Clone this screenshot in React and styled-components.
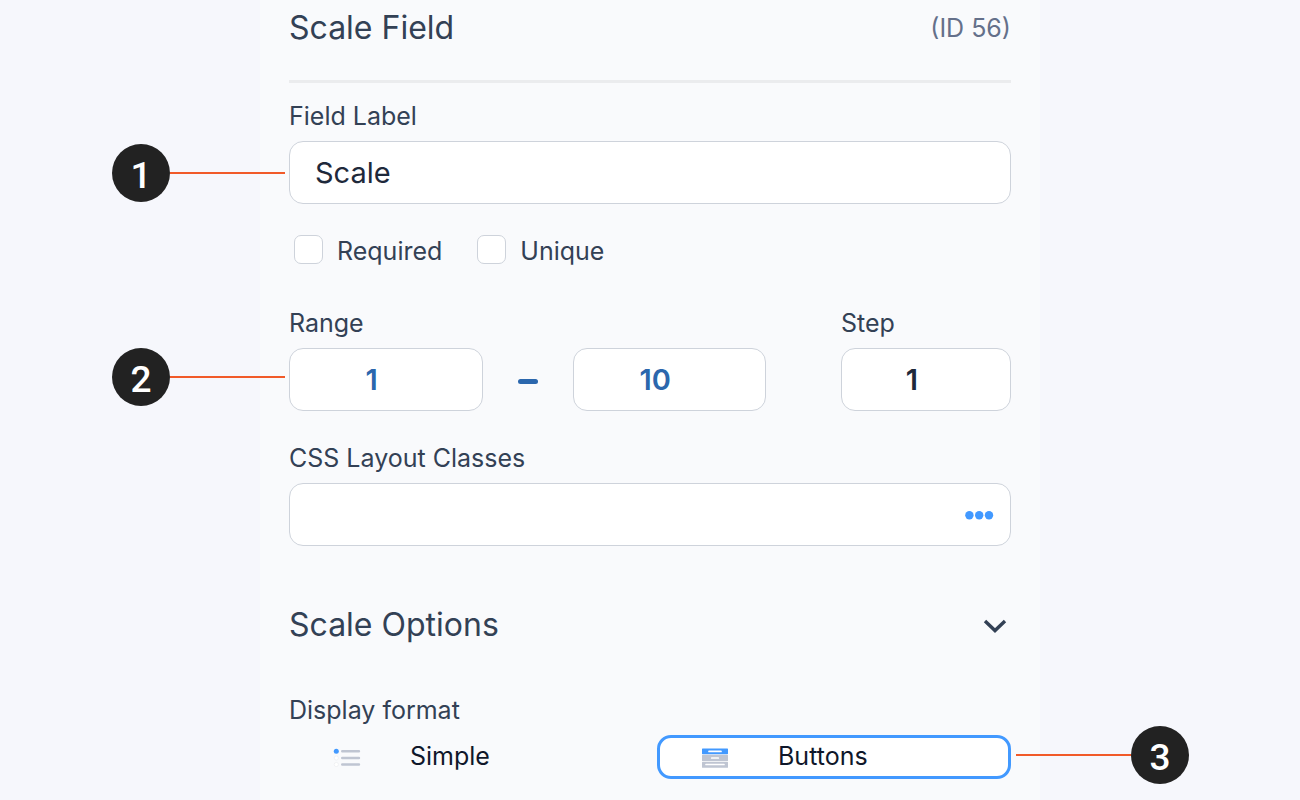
import { useState } from 'react';
import styled, { createGlobalStyle } from 'styled-components';

const GlobalStyle = createGlobalStyle`
  * {
    box-sizing: border-box;
  }
  body {
    margin: 0;
    background: #f6f7fc;
    color: #334155;
    font-family: Inter, 'Liberation Sans', sans-serif;
    font-size: 25px;
    line-height: 32px;
  }
  input, button {
    font: inherit;
    color: inherit;
  }
`;

const Panel = styled.form`
  width: 60%;
  min-height: 100vh;
  margin: 0 auto;
  padding: 8px 29px 20px;
  background: #f9fafc;
`;

const Header = styled.header`
  display: flex;
  justify-content: space-between;
  align-items: center;
  padding-bottom: 32px;
  border-bottom: 3px solid #ebecee;
  margin-bottom: 17px;
`;

const Title = styled.h2`
  margin: 0;
  font-size: 32px;
  font-weight: 400;
  line-height: 40px;
`;

const FieldId = styled.span`
  color: #64708a;
`;

const Field = styled.div`
  display: flex;
  flex-direction: column;
  gap: 9px;
  min-width: 0;
`;

const Control = styled.div`
  position: relative;
  display: flex;
  align-items: center;
`;

const TextInput = styled.input`
  width: 100%;
  height: 63px;
  padding: 0 25px;
  border: 1px solid #ced3db;
  border-radius: 14px;
  background: #fff;
  color: #1e293b;
  font-size: 29px;
`;

const NumberInput = styled(TextInput)`
  padding: 0 28px 0 0;
  color: ${({ $accent }) => ($accent ? '#2b67ad' : '#1e293b')};
  font-weight: 600;
  text-align: center;
  appearance: textfield;
  &::-webkit-inner-spin-button {
    appearance: none;
    margin: 0;
  }
`;

const Checks = styled.div`
  display: flex;
  gap: 35px;
  margin: 31px 0 40px;
  padding-left: 5px;
`;

const CheckLabel = styled.label`
  display: flex;
  align-items: flex-start;
  gap: 14px;
`;

const Checkbox = styled.input`
  appearance: none;
  width: 29px;
  height: 29px;
  margin: 0;
  border: 1px solid #ced3db;
  border-radius: 7px;
  background: #fff;
  &:checked {
    background: #4299ff;
  }
`;

const Numbers = styled.div`
  display: grid;
  grid-template-columns: 477fr 170fr;
  gap: 75px;
  margin-bottom: 31px;
`;

const Dash = styled.span`
  flex: 0 0 20px;
  height: 5px;
  margin: 3px 35px 0;
  border-radius: 3px;
  background: #2b67ad;
`;

const MoreButton = styled.button`
  position: absolute;
  right: 12px;
  display: flex;
  padding: 5px;
  border: 0;
  background: none;
`;

const SectionToggle = styled.button`
  display: flex;
  justify-content: space-between;
  align-items: center;
  width: 100%;
  margin: 59px 0 49px;
  padding: 0 4px 0 0;
  border: 0;
  background: none;
  text-align: left;
`;

const Options = styled.div`
  position: relative;
  display: grid;
  grid-template-columns: 1fr 1fr;
  gap: 14px;
`;

const Option = styled.label`
  position: relative;
  display: flex;
  align-items: center;
  gap: 49px;
  height: 44px;
  padding: 0 0 2px 41px;
  border: 3px solid ${({ $selected }) => ($selected ? '#4299ff' : 'transparent')};
  border-radius: 14px;
  background: ${({ $selected }) => ($selected ? '#fff' : 'transparent')};
  color: #0f172a;
`;

const Radio = styled.input`
  position: absolute;
  inset: 0;
  width: 100%;
  height: 100%;
  margin: 0;
  opacity: 0;
`;

const CalloutStyle = styled.div`
  position: absolute;
  top: ${({ $top }) => $top}px;
  ${({ $side }) =>
    $side === 'left' ? 'right: calc(100% + 4px)' : 'left: calc(100% + 5px)'};
  display: flex;
  flex-direction: ${({ $side }) => ($side === 'left' ? 'row' : 'row-reverse')};
  align-items: center;
  width: 173px;
`;

const Badge = styled.span`
  flex: none;
  width: 58px;
  height: 58px;
  padding-top: 3px;
  border-radius: 50%;
  background: #222;
  color: #fff;
  font-family: Roboto, 'Liberation Sans', sans-serif;
  font-size: 37px;
  font-weight: 500;
  line-height: 58px;
  text-align: center;
`;

const Line = styled.span`
  flex: 1;
  height: 2px;
  background: #f15a29;
`;

function Callout({ number, top, side = 'left' }) {
  return (
    <CalloutStyle $side={side} $top={top}>
      <Badge>{number}</Badge>
      <Line />
    </CalloutStyle>
  );
}

function DotsIcon() {
  return (
    <svg width="30" height="10" viewBox="0 0 30 10" fill="#4299ff">
      <circle cx="5.4" cy="5.2" r="4.2" />
      <circle cx="15.2" cy="5.2" r="4.2" />
      <circle cx="25" cy="5.2" r="4.2" />
    </svg>
  );
}

function ChevronIcon() {
  return (
    <svg width="24" height="16" viewBox="0 0 24 16" fill="none">
      <path d="M2 4l10 9.6L22 4" stroke="#334155" strokeWidth="3.4" />
    </svg>
  );
}

function ListIcon() {
  return (
    <svg width="28" height="24" viewBox="0 -4 28 24" fill="none">
      <circle cx="3.3" cy="3.3" r="2.5" fill="#4299ff" />
      <circle cx="3.3" cy="10" r="2.1" fill="#fff" stroke="#e9ebef" strokeWidth=".6" />
      <circle cx="3.3" cy="16.5" r="2.1" fill="#fff" stroke="#e9ebef" strokeWidth=".6" />
      <path
        d="M9.3 3.3h16.6M9.3 10h16.6M9.3 16.5h16.6"
        stroke="#bfc5d2"
        strokeWidth="2.6"
        strokeLinecap="round"
      />
    </svg>
  );
}

function ButtonsIcon() {
  return (
    <svg width="28" height="24" viewBox="0 -4 28 24">
      <rect x="1" y=".4" width="26" height="5.8" rx=".6" fill="#4299ff" />
      <rect x="1" y="6.8" width="26" height="6.2" rx=".6" fill="#bfc5d2" />
      <rect x="1" y="13.8" width="26" height="6" rx=".6" fill="#bfc5d2" />
      <path
        d="M8 3.4h12M10.7 10h6.6M5 16.5h18"
        stroke="#fff"
        strokeWidth="1.7"
        strokeLinecap="round"
      />
    </svg>
  );
}

const formats = [
  { value: 'simple', label: 'Simple', Icon: ListIcon },
  { value: 'buttons', label: 'Buttons', Icon: ButtonsIcon },
];

export default function App() {
  const [format, setFormat] = useState('buttons');
  const [open, setOpen] = useState(true);
  return (
    <>
      <GlobalStyle />
      <Panel onSubmit={(e) => e.preventDefault()}>
        <Header>
          <Title>Scale Field</Title>
          <FieldId>(ID 56)</FieldId>
        </Header>
        <Field>
          <label htmlFor="label">Field Label</label>
          <Control>
            <TextInput id="label" type="text" defaultValue="Scale" />
            <Callout number={1} top={3} />
          </Control>
        </Field>
        <Checks>
          <CheckLabel>
            <Checkbox type="checkbox" name="required" />
            Required
          </CheckLabel>
          <CheckLabel>
            <Checkbox type="checkbox" name="unique" />
            Unique
          </CheckLabel>
        </Checks>
        <Numbers>
          <Field>
            <label htmlFor="min">Range</label>
            <Control>
              <NumberInput $accent id="min" type="number" defaultValue={1} />
              <Dash />
              <NumberInput
                $accent
                type="number"
                aria-label="Range maximum"
                defaultValue={10}
              />
              <Callout number={2} top={0} />
            </Control>
          </Field>
          <Field>
            <label htmlFor="step">Step</label>
            <NumberInput id="step" type="number" defaultValue={1} />
          </Field>
        </Numbers>
        <Field>
          <label htmlFor="classes">CSS Layout Classes</label>
          <Control>
            <TextInput id="classes" type="text" />
            <MoreButton type="button" aria-label="Show layouts">
              <DotsIcon />
            </MoreButton>
          </Control>
        </Field>
        <SectionToggle
          type="button"
          aria-expanded={open}
          onClick={() => setOpen(!open)}
        >
          <Title as="span">Scale Options</Title>
          <ChevronIcon />
        </SectionToggle>
        {open && (
          <Field role="radiogroup" aria-labelledby="format">
            <span id="format">Display format</span>
            <Options>
              {formats.map(({ value, label, Icon }) => (
                <Option key={value} $selected={format === value}>
                  <Radio
                    type="radio"
                    name="format"
                    checked={format === value}
                    onChange={() => setFormat(value)}
                  />
                  <Icon />
                  {label}
                </Option>
              ))}
              <Callout number={3} top={-9} side="right" />
            </Options>
          </Field>
        )}
      </Panel>
    </>
  );
}
